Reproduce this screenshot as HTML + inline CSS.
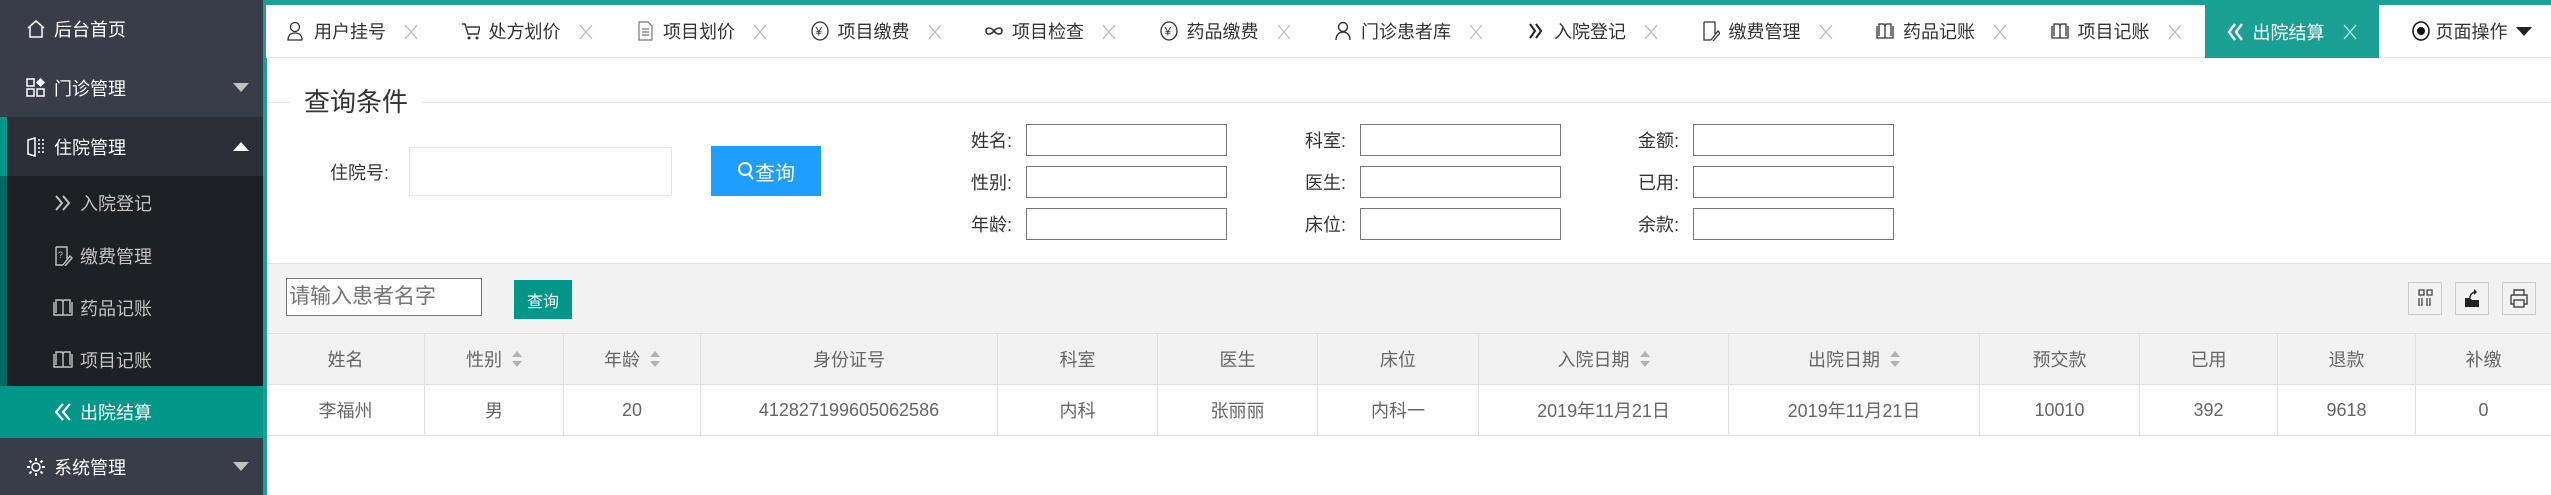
<!DOCTYPE html>
<html><head><meta charset="utf-8"><style>
*{margin:0;padding:0;box-sizing:border-box}
body{width:2551px;height:495px;overflow:hidden;background:#fff;font-family:"Liberation Sans","Noto Sans CJK SC",sans-serif;position:relative;color:#333}
.abs{position:absolute}
.side{left:0;top:0;width:263px;height:495px;background:#393D49}
.si{position:absolute;left:0;width:263px;color:#fff;font-size:18px;display:flex;align-items:center}
.si .ic{position:absolute;left:26px;width:20px;height:20px}
.si .tx{position:absolute;left:54px}
.sub .ic{left:53px}.sub .tx{left:80px}
.sub{color:#c2c2c2}
.arr{position:absolute;left:233px;width:0;height:0;border-left:8px solid transparent;border-right:8px solid transparent}
.tabs{left:266px;top:5px;right:0;height:53px;border-bottom:1px solid #e2e2e2;display:flex;background:#fff}
.tab{height:52px;display:flex;align-items:center;font-size:18px;color:#333;padding-left:21px;position:relative;flex:none}
.tab .ic{width:18px;height:20px;margin-right:9px}
.tab .x{position:absolute;top:19px;width:14px;height:16px}
input{font-family:inherit}
.lbl{font-size:18px;color:#333;position:absolute}
.fi{position:absolute;width:201px;height:32px;border:1px solid #767676;background:#fff}
.th,.td{position:absolute;display:flex;align-items:center;justify-content:center;font-size:18px;color:#666;border-right:1px solid #e2e2e2}
.sort{display:inline-block;margin-left:10px;position:relative;width:10px;height:16px}
.sort:before{content:"";position:absolute;top:0;left:0;border-left:5px solid transparent;border-right:5px solid transparent;border-bottom:6px solid #b2b2b2}
.sort:after{content:"";position:absolute;bottom:0;left:0;border-left:5px solid transparent;border-right:5px solid transparent;border-top:6px solid #b2b2b2}
.tb{position:absolute;top:282px;width:34px;height:33px;border:1px solid #ccc}
</style></head><body>
<div class="abs side"></div>
<div class="abs" style="left:0;top:117px;width:263px;height:59px;background:#2B2E37"></div>
<div class="abs" style="left:0;top:176px;width:263px;height:210px;background:#1F2026"></div>
<div class="abs" style="left:0;top:117px;width:7px;height:59px;background:#009688"></div>
<div class="abs" style="left:0;top:176px;width:7px;height:210px;background:#00695f"></div>
<div class="abs" style="left:0;top:386px;width:263px;height:52px;background:#009688"></div>
<div class="abs" style="left:263px;top:0;width:4px;height:495px;background:#1AA094"></div>
<div class="abs" style="left:263px;top:0;width:2288px;height:5px;background:#1AA094"></div>

<div class="si" style="top:0;height:58px"><svg class="ic" viewBox="0 0 20 20"><path d="M2 9 L10 2 L18 9 M4 8 V18 H16 V8" fill="none" stroke="#fff" stroke-width="1.5"/></svg><span class="tx">后台首页</span></div>
<div class="si" style="top:58px;height:59px"><svg class="ic" viewBox="0 0 20 20"><rect x="1" y="1" width="7" height="7" fill="none" stroke="#fff" stroke-width="1.5"/><rect x="1" y="11" width="7" height="7" fill="none" stroke="#fff" stroke-width="1.5"/><rect x="11" y="11" width="7" height="7" fill="none" stroke="#fff" stroke-width="1.5"/><path d="M14.5 0 L19 4.5 L14.5 9 L10 4.5Z" fill="#fff"/></svg><span class="tx">门诊管理</span><span class="arr" style="top:25px;border-top:9px solid #c2c2c2"></span></div>
<div class="si" style="top:117px;height:59px"><svg class="ic" viewBox="0 0 20 20"><path d="M2 3 L9 1 V19 L2 17Z M12 3h2M12 7h2M12 11h2M12 15h2M16 3h2M16 7h2M16 11h2M16 15h2" fill="none" stroke="#fff" stroke-width="1.5"/></svg><span class="tx">住院管理</span><span class="arr" style="top:25px;border-bottom:9px solid #fff"></span></div>
<div class="si sub" style="top:176px;height:54px"><svg class="ic" viewBox="0 0 20 20"><path d="M3 3l6 7-6 7M10 3l6 7-6 7" fill="none" stroke="#c2c2c2" stroke-width="2"/></svg><span class="tx">入院登记</span></div>
<div class="si sub" style="top:230px;height:52px"><svg class="ic" viewBox="0 0 20 20"><path d="M3 1h11v12M3 1v18h7" fill="none" stroke="#c2c2c2" stroke-width="1.4"/><text x="5" y="12" font-size="9" fill="#c2c2c2">?</text><path d="M10 19 L17 10 L19 12 L12 20" fill="none" stroke="#c2c2c2" stroke-width="1.4"/></svg><span class="tx">缴费管理</span></div>
<div class="si sub" style="top:282px;height:52px"><svg class="ic" viewBox="0 0 20 20"><path d="M1 4 V17 H19 V4 M3 15 V2 H9 L10 4 L11 2 H17 V15 M10 4 V17" fill="none" stroke="#c2c2c2" stroke-width="1.4"/></svg><span class="tx">药品记账</span></div>
<div class="si sub" style="top:334px;height:52px"><svg class="ic" viewBox="0 0 20 20"><path d="M1 4 V17 H19 V4 M3 15 V2 H9 L10 4 L11 2 H17 V15 M10 4 V17" fill="none" stroke="#c2c2c2" stroke-width="1.4"/></svg><span class="tx">项目记账</span></div>
<div class="si sub" style="top:386px;height:52px;color:#fff"><svg class="ic" viewBox="0 0 20 20"><path d="M10 2l-7 8 7 8M17 2l-7 8 7 8" fill="none" stroke="#fff" stroke-width="2.2"/></svg><span class="tx">出院结算</span></div>
<div class="si" style="top:438px;height:57px"><svg class="ic" viewBox="0 0 20 20"><circle cx="10" cy="10" r="4" fill="none" stroke="#fff" stroke-width="1.5"/><path d="M10 1v3M10 16v3M1 10h3M16 10h3M3.5 3.5l2 2M14.5 14.5l2 2M3.5 16.5l2-2M14.5 5.5l2-2" stroke="#fff" stroke-width="2"/></svg><span class="tx">系统管理</span><span class="arr" style="top:24px;border-top:9px solid #c2c2c2"></span></div>

<div class="abs tabs">
<div class="tab" style="width:174.5px"><svg class="ic" viewBox="0 0 18 20"><circle cx="8" cy="6" r="4.5" fill="none" stroke="#333" stroke-width="1.3"/><path d="M1 19c0-5 3-7 7-7s7 2 7 7z" fill="none" stroke="#333" stroke-width="1.3"/></svg>用户挂号<svg class="x" style="left:138px" viewBox="0 0 14 16"><path d="M1 1l12 14M13 1L1 15" stroke="#bbb" stroke-width="1.3"/></svg></div>
<div class="tab" style="width:174.5px"><svg class="ic" viewBox="0 0 18 20"><path d="M0 3h3l3 10h10l2-7H5" fill="none" stroke="#333" stroke-width="1.4"/><circle cx="7" cy="17" r="1.5" fill="#333"/><circle cx="15" cy="17" r="1.5" fill="#333"/></svg>处方划价<svg class="x" style="left:138px" viewBox="0 0 14 16"><path d="M1 1l12 14M13 1L1 15" stroke="#bbb" stroke-width="1.3"/></svg></div>
<div class="tab" style="width:174.5px"><svg class="ic" viewBox="0 0 18 20"><path d="M3 1h9l4 4v14H3z M6 8h7M6 11h7M6 14h7" fill="none" stroke="#777" stroke-width="1.2"/></svg>项目划价<svg class="x" style="left:138px" viewBox="0 0 14 16"><path d="M1 1l12 14M13 1L1 15" stroke="#bbb" stroke-width="1.3"/></svg></div>
<div class="tab" style="width:174.5px"><svg class="ic" viewBox="0 0 18 20"><ellipse cx="9" cy="10" rx="8" ry="9" fill="none" stroke="#333" stroke-width="1.3"/><text x="4.5" y="14.5" font-size="12" fill="#333">¥</text></svg>项目缴费<svg class="x" style="left:138px" viewBox="0 0 14 16"><path d="M1 1l12 14M13 1L1 15" stroke="#bbb" stroke-width="1.3"/></svg></div>
<div class="tab" style="width:174.5px"><svg class="ic" viewBox="0 0 18 20"><path d="M9 10c-3-4-8-4-8 0s5 4 8 0 8-4 8 0-5 4-8 0" fill="none" stroke="#333" stroke-width="1.6"/></svg>项目检查<svg class="x" style="left:138px" viewBox="0 0 14 16"><path d="M1 1l12 14M13 1L1 15" stroke="#bbb" stroke-width="1.3"/></svg></div>
<div class="tab" style="width:174.5px"><svg class="ic" viewBox="0 0 18 20"><ellipse cx="9" cy="10" rx="8" ry="9" fill="none" stroke="#333" stroke-width="1.3"/><text x="4.5" y="14.5" font-size="12" fill="#333">¥</text></svg>药品缴费<svg class="x" style="left:138px" viewBox="0 0 14 16"><path d="M1 1l12 14M13 1L1 15" stroke="#bbb" stroke-width="1.3"/></svg></div>
<div class="tab" style="width:193px"><svg class="ic" viewBox="0 0 18 20"><circle cx="9" cy="6" r="4.5" fill="none" stroke="#333" stroke-width="1.4"/><path d="M2 19c0-5 3-8 7-8s7 3 7 8" fill="none" stroke="#333" stroke-width="1.4"/></svg>门诊患者库<svg class="x" style="left:156px" viewBox="0 0 14 16"><path d="M1 1l12 14M13 1L1 15" stroke="#bbb" stroke-width="1.3"/></svg></div>
<div class="tab" style="width:174.5px"><svg class="ic" viewBox="0 0 18 20"><path d="M3 3l5 7-5 7M9 3l5 7-5 7" fill="none" stroke="#222" stroke-width="2"/></svg>入院登记<svg class="x" style="left:138px" viewBox="0 0 14 16"><path d="M1 1l12 14M13 1L1 15" stroke="#bbb" stroke-width="1.3"/></svg></div>
<div class="tab" style="width:174.5px"><svg class="ic" viewBox="0 0 18 20"><path d="M2 1h11v12M2 1v18h7" fill="none" stroke="#333" stroke-width="1.3"/><path d="M9 19 L16 10 L18 12 L11 20" fill="none" stroke="#333" stroke-width="1.3"/></svg>缴费管理<svg class="x" style="left:138px" viewBox="0 0 14 16"><path d="M1 1l12 14M13 1L1 15" stroke="#bbb" stroke-width="1.3"/></svg></div>
<div class="tab" style="width:174.5px"><svg class="ic" viewBox="0 0 18 20"><path d="M1 5V17H17V5M3 15V3H8L9 5L10 3H15V15M9 5V17" fill="none" stroke="#333" stroke-width="1.3"/></svg>药品记账<svg class="x" style="left:138px" viewBox="0 0 14 16"><path d="M1 1l12 14M13 1L1 15" stroke="#bbb" stroke-width="1.3"/></svg></div>
<div class="tab" style="width:175px"><svg class="ic" viewBox="0 0 18 20"><path d="M1 5V17H17V5M3 15V3H8L9 5L10 3H15V15M9 5V17" fill="none" stroke="#333" stroke-width="1.3"/></svg>项目记账<svg class="x" style="left:138px" viewBox="0 0 14 16"><path d="M1 1l12 14M13 1L1 15" stroke="#bbb" stroke-width="1.3"/></svg></div>
<div class="tab" style="width:174px;background:#1AA094;color:#fff;height:53px"><svg class="ic" viewBox="0 0 18 20"><path d="M9 2l-6 8 6 8M16 2l-6 8 6 8" fill="none" stroke="#fff" stroke-width="2.4"/></svg>出院结算<svg class="x" style="left:138px" viewBox="0 0 14 16"><path d="M1 1l12 14M13 1L1 15" stroke="#bfe5e1" stroke-width="1.3"/></svg></div>
<div class="tab" style="width:171px;padding-left:32px;border-left:1px solid #eee"><svg class="ic" viewBox="0 0 18 20" style="margin-right:6px"><ellipse cx="9" cy="10" rx="8" ry="9" fill="none" stroke="#111" stroke-width="1.5"/><circle cx="9" cy="10" r="4" fill="#111"/></svg>页面操作<span style="margin-left:8px;width:0;height:0;border-left:8px solid transparent;border-right:8px solid transparent;border-top:9px solid #222"></span></div>
</div>

<div class="abs" style="left:267px;top:102px;right:0;height:1px;background:#e6e6e6"></div>
<div class="abs" style="left:290px;top:84px;padding:0 14px;background:#fff;font-size:26px;color:#333;line-height:36px">查询条件</div>
<div class="lbl" style="left:330px;top:159px">住院号:</div>
<div class="abs" style="left:409px;top:147px;width:263px;height:49px;border:1px solid #e6e6e6"></div>
<div class="abs" style="left:711px;top:146px;width:110px;height:50px;background:#1E9FFF;color:#fff;font-size:20px;display:flex;align-items:center;justify-content:center"><svg width="18" height="20" viewBox="0 0 18 20"><circle cx="8" cy="8" r="6" fill="none" stroke="#fff" stroke-width="2"/><path d="M12 13 L16 18" stroke="#fff" stroke-width="2"/></svg>查询</div>

<div class="lbl" style="left:971px;top:127px">姓名:</div><div class="fi" style="left:1026px;top:124px"></div>
<div class="lbl" style="left:971px;top:169px">性别:</div><div class="fi" style="left:1026px;top:166px"></div>
<div class="lbl" style="left:971px;top:211px">年龄:</div><div class="fi" style="left:1026px;top:208px"></div>
<div class="lbl" style="left:1305px;top:127px">科室:</div><div class="fi" style="left:1360px;top:124px"></div>
<div class="lbl" style="left:1305px;top:169px">医生:</div><div class="fi" style="left:1360px;top:166px"></div>
<div class="lbl" style="left:1305px;top:211px">床位:</div><div class="fi" style="left:1360px;top:208px"></div>
<div class="lbl" style="left:1638px;top:127px">金额:</div><div class="fi" style="left:1693px;top:124px"></div>
<div class="lbl" style="left:1638px;top:169px">已用:</div><div class="fi" style="left:1693px;top:166px"></div>
<div class="lbl" style="left:1638px;top:211px">余款:</div><div class="fi" style="left:1693px;top:208px"></div>

<div class="abs" style="left:267px;top:263px;right:0;height:121px;background:#f2f2f2;border-top:1px solid #e2e2e2"></div>
<div class="abs" style="left:286px;top:278px;width:196px;height:38px;border:1px solid #767676;background:#fff;font-size:21px;color:#757575;padding-left:2px;line-height:36px">请输入患者名字</div>
<div class="abs" style="left:514px;top:280px;width:58px;height:39px;background:#009688;color:#fff;font-size:16px;display:flex;align-items:center;justify-content:center">查询</div>
<div class="tb" style="left:2408px"><svg width="32" height="31" viewBox="0 0 32 31"><rect x="10" y="7" width="5" height="5" fill="none" stroke="#444" stroke-width="1.3"/><rect x="18" y="7" width="5" height="5" fill="none" stroke="#444" stroke-width="1.3"/><path d="M10 15v8M13 15v8M18 15v8M21 15v8" stroke="#444" stroke-width="1.3"/></svg></div>
<div class="tb" style="left:2455px"><svg width="32" height="31" viewBox="0 0 32 31"><path d="M9 15h5l2 2h7v7H9z" fill="#222"/><path d="M14 15c0-4 3-6 6-6" fill="none" stroke="#222" stroke-width="1.5"/><path d="M18 6l3 3-3 3" fill="#222"/></svg></div>
<div class="tb" style="left:2502px"><svg width="32" height="31" viewBox="0 0 32 31"><path d="M11 12V7h10v5M8 12h16v9h-3M11 21H8v-9" fill="none" stroke="#444" stroke-width="1.4"/><rect x="11" y="17" width="10" height="7" fill="none" stroke="#444" stroke-width="1.4"/></svg></div>

<div class="abs" style="left:267px;top:333px;right:0;height:1px;background:#e2e2e2"></div>
<div class="abs" style="left:267px;top:384px;right:0;height:1px;background:#e2e2e2"></div>
<div class="abs" style="left:267px;top:435px;right:0;height:1px;background:#e2e2e2"></div>

<div class="th" style="left:267px;top:334px;width:158px;height:50px">姓名</div>
<div class="th" style="left:425px;top:334px;width:139px;height:50px">性别<span class="sort"></span></div>
<div class="th" style="left:564px;top:334px;width:137px;height:50px">年龄<span class="sort"></span></div>
<div class="th" style="left:701px;top:334px;width:297px;height:50px">身份证号</div>
<div class="th" style="left:998px;top:334px;width:160px;height:50px">科室</div>
<div class="th" style="left:1158px;top:334px;width:160px;height:50px">医生</div>
<div class="th" style="left:1318px;top:334px;width:161px;height:50px">床位</div>
<div class="th" style="left:1479px;top:334px;width:250px;height:50px">入院日期<span class="sort"></span></div>
<div class="th" style="left:1729px;top:334px;width:251px;height:50px">出院日期<span class="sort"></span></div>
<div class="th" style="left:1980px;top:334px;width:160px;height:50px">预交款</div>
<div class="th" style="left:2140px;top:334px;width:138px;height:50px">已用</div>
<div class="th" style="left:2278px;top:334px;width:138px;height:50px">退款</div>
<div class="th" style="left:2416px;top:334px;width:135px;height:50px;border:none">补缴</div>

<div class="td" style="left:267px;top:385px;width:158px;height:50px">李福州</div>
<div class="td" style="left:425px;top:385px;width:139px;height:50px">男</div>
<div class="td" style="left:564px;top:385px;width:137px;height:50px">20</div>
<div class="td" style="left:701px;top:385px;width:297px;height:50px">412827199605062586</div>
<div class="td" style="left:998px;top:385px;width:160px;height:50px">内科</div>
<div class="td" style="left:1158px;top:385px;width:160px;height:50px">张丽丽</div>
<div class="td" style="left:1318px;top:385px;width:161px;height:50px">内科一</div>
<div class="td" style="left:1479px;top:385px;width:250px;height:50px">2019年11月21日</div>
<div class="td" style="left:1729px;top:385px;width:251px;height:50px">2019年11月21日</div>
<div class="td" style="left:1980px;top:385px;width:160px;height:50px">10010</div>
<div class="td" style="left:2140px;top:385px;width:138px;height:50px">392</div>
<div class="td" style="left:2278px;top:385px;width:138px;height:50px">9618</div>
<div class="td" style="left:2416px;top:385px;width:135px;height:50px;border:none">0</div>
</body></html>
